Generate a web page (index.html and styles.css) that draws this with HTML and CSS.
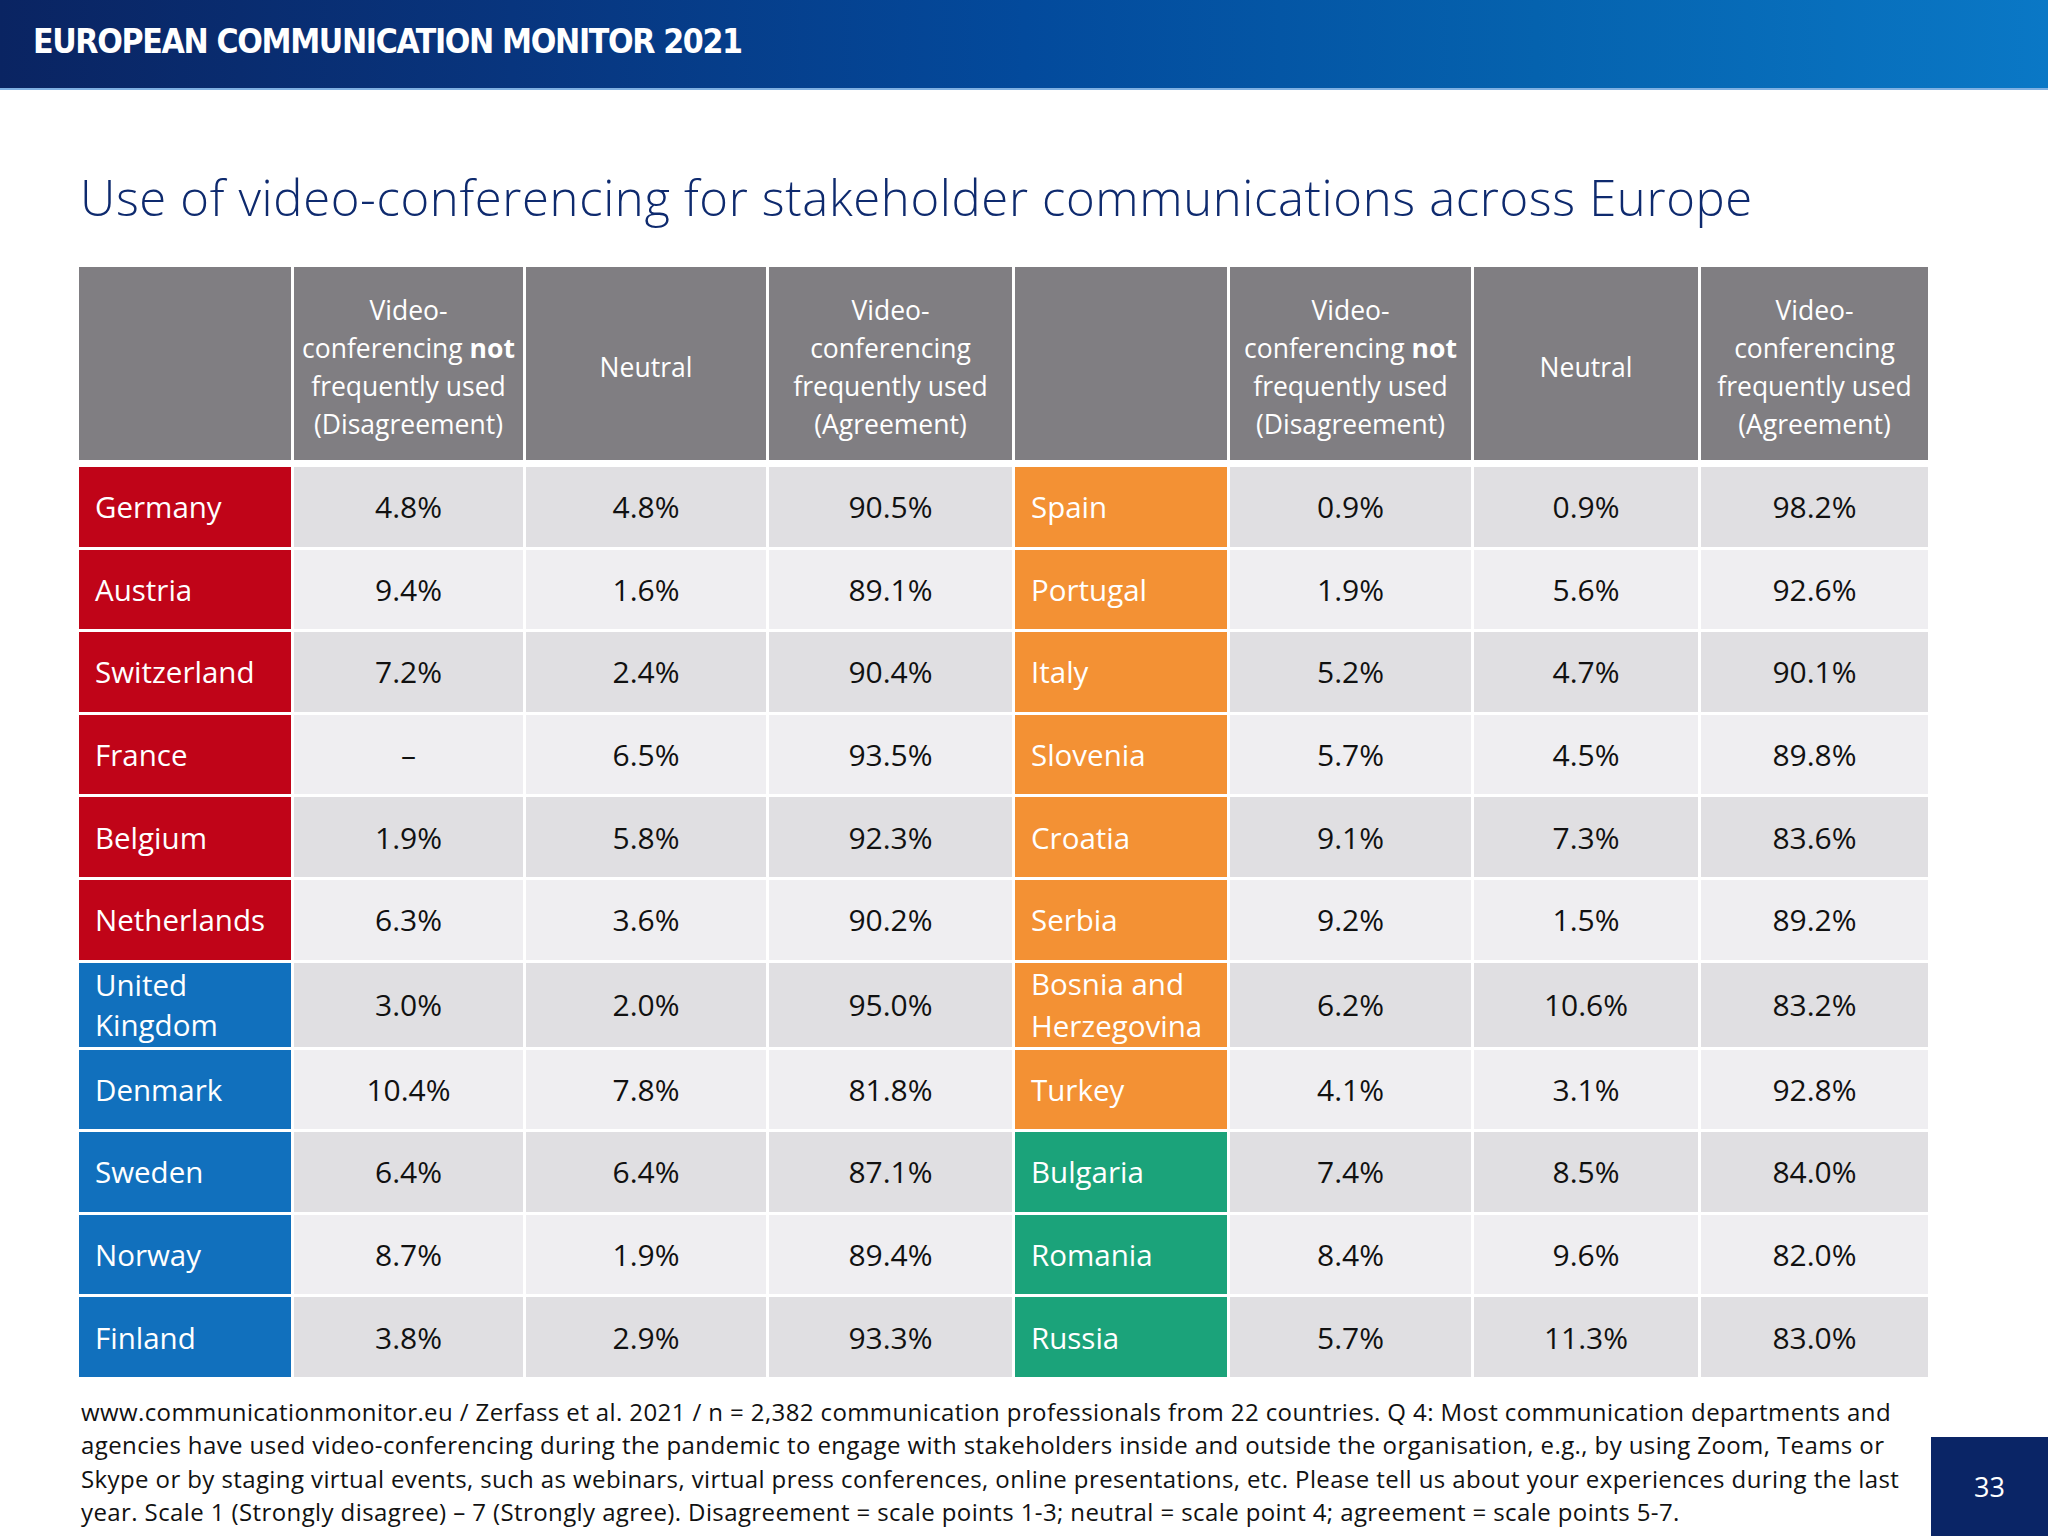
FILE: index.html
```html
<!DOCTYPE html>
<html lang="en">
<head>
<meta charset="utf-8">
<title>European Communication Monitor 2021</title>
<link rel="stylesheet" href="styles.css">
</head>
<body>
<div class="slide">
  <header class="topbar">
    <div class="brand">EUROPEAN COMMUNICATION MONITOR 2021</div>
  </header>
  <h1 class="title">Use of video-conferencing for stakeholder communications across Europe</h1>

  <div class="table">
    <div class="hcell"></div>
    <div class="hcell"><span>Video-<br>conferencing <b>not</b><br>frequently used<br>(Disagreement)</span></div>
    <div class="hcell"><span>Neutral</span></div>
    <div class="hcell"><span>Video-<br>conferencing<br>frequently used<br>(Agreement)</span></div>
    <div class="hcell"></div>
    <div class="hcell"><span>Video-<br>conferencing <b>not</b><br>frequently used<br>(Disagreement)</span></div>
    <div class="hcell"><span>Neutral</span></div>
    <div class="hcell"><span>Video-<br>conferencing<br>frequently used<br>(Agreement)</span></div>

    <div class="country red">Germany</div><div class="num dark">4.8%</div><div class="num dark">4.8%</div><div class="num dark">90.5%</div>
    <div class="country orange">Spain</div><div class="num dark">0.9%</div><div class="num dark">0.9%</div><div class="num dark">98.2%</div>

    <div class="country red">Austria</div><div class="num light">9.4%</div><div class="num light">1.6%</div><div class="num light">89.1%</div>
    <div class="country orange">Portugal</div><div class="num light">1.9%</div><div class="num light">5.6%</div><div class="num light">92.6%</div>

    <div class="country red">Switzerland</div><div class="num dark">7.2%</div><div class="num dark">2.4%</div><div class="num dark">90.4%</div>
    <div class="country orange">Italy</div><div class="num dark">5.2%</div><div class="num dark">4.7%</div><div class="num dark">90.1%</div>

    <div class="country red">France</div><div class="num light">–</div><div class="num light">6.5%</div><div class="num light">93.5%</div>
    <div class="country orange">Slovenia</div><div class="num light">5.7%</div><div class="num light">4.5%</div><div class="num light">89.8%</div>

    <div class="country red">Belgium</div><div class="num dark">1.9%</div><div class="num dark">5.8%</div><div class="num dark">92.3%</div>
    <div class="country orange">Croatia</div><div class="num dark">9.1%</div><div class="num dark">7.3%</div><div class="num dark">83.6%</div>

    <div class="country red">Netherlands</div><div class="num light">6.3%</div><div class="num light">3.6%</div><div class="num light">90.2%</div>
    <div class="country orange">Serbia</div><div class="num light">9.2%</div><div class="num light">1.5%</div><div class="num light">89.2%</div>

    <div class="country blue two tight"><span>United<br>Kingdom</span></div><div class="num dark">3.0%</div><div class="num dark">2.0%</div><div class="num dark">95.0%</div>
    <div class="country orange two"><span>Bosnia and<br>Herzegovina</span></div><div class="num dark">6.2%</div><div class="num dark">10.6%</div><div class="num dark">83.2%</div>

    <div class="country blue">Denmark</div><div class="num light">10.4%</div><div class="num light">7.8%</div><div class="num light">81.8%</div>
    <div class="country orange">Turkey</div><div class="num light">4.1%</div><div class="num light">3.1%</div><div class="num light">92.8%</div>

    <div class="country blue">Sweden</div><div class="num dark">6.4%</div><div class="num dark">6.4%</div><div class="num dark">87.1%</div>
    <div class="country green">Bulgaria</div><div class="num dark">7.4%</div><div class="num dark">8.5%</div><div class="num dark">84.0%</div>

    <div class="country blue">Norway</div><div class="num light">8.7%</div><div class="num light">1.9%</div><div class="num light">89.4%</div>
    <div class="country green">Romania</div><div class="num light">8.4%</div><div class="num light">9.6%</div><div class="num light">82.0%</div>

    <div class="country blue">Finland</div><div class="num dark">3.8%</div><div class="num dark">2.9%</div><div class="num dark">93.3%</div>
    <div class="country green">Russia</div><div class="num dark">5.7%</div><div class="num dark">11.3%</div><div class="num dark">83.0%</div>
  </div>

  <footer class="footer">
    <p class="source">www.communicationmonitor.eu / Zerfass et al. 2021 / n = 2,382 communication professionals from 22 countries. Q 4: Most communication departments and<br>agencies have used video-conferencing during the pandemic to engage with stakeholders inside and outside the organisation, e.g., by using Zoom, Teams or<br>Skype or by staging virtual events, such as webinars, virtual press conferences, online presentations, etc. Please tell us about your experiences during the last<br>year. Scale 1 (Strongly disagree) – 7 (Strongly agree). Disagreement = scale points 1-3; neutral = scale point 4; agreement = scale points 5-7.</p>
    <div class="pagenum">33</div>
  </footer>
</div>
</body>
</html>
```

FILE: styles.css
```css
* { box-sizing: border-box; }
html, body { margin: 0; padding: 0; background: #ffffff; }
body { font-family: "Open Sans", "Noto Sans", sans-serif; }

.slide {
  width: 2048px;
  height: 1536px;
  overflow: hidden;
  display: flex;
  flex-direction: column;
  background: #ffffff;
}

.topbar {
  height: 90px;
  flex: none;
  background: linear-gradient(90deg, #0a2462 0%, #08357e 25%, #034a9c 50%, #0562ae 75%, #0a78c6 100%);
  border-bottom: 2px solid #7fb0e2;
  display: flex;
  align-items: center;
  padding-left: 33px;
}
.brand {
  font-family: "DejaVu Sans Condensed", "DejaVu Sans", sans-serif;
  font-stretch: condensed;
  font-weight: bold;
  font-size: 33.5px;
  color: #ffffff;
  letter-spacing: -1.35px;
  margin-top: -6px;
}

.title {
  margin: 75px 0 0 80px;
  font-size: 49px;
  font-weight: 300;
  letter-spacing: 0.65px;
  line-height: 64px;
  color: #0e2a6e;
  white-space: nowrap;
}

.table {
  margin: 38px 0 0 79px;
  display: grid;
  grid-template-columns: 212px 229px 240px 243px 212px 241px 224px 227px;
  grid-template-rows: 197px repeat(6, 79.6px) 84px repeat(4, 79.6px);
  gap: 3px;
  width: 1849px;
}

.hcell {
  height: 193px;
  background: #807e82;
  color: #ffffff;
  font-size: 26.5px;
  line-height: 38px;
  text-align: center;
  display: flex;
  align-items: center;
  justify-content: center;
  white-space: nowrap;
  padding-top: 6px;
}
.hcell b { font-weight: 700; }

.country {
  color: #ffffff;
  font-size: 29.5px;
  display: flex;
  align-items: center;
  padding-left: 16px;
  white-space: nowrap;
}
.country.two { line-height: 42px; }
.country.two.tight { line-height: 40px; }
.red { background: #c00418; }
.blue { background: #1170bd; }
.orange { background: #f39134; }
.green { background: #1ba37a; }

.num {
  color: #111111;
  font-size: 30px;
  display: flex;
  align-items: center;
  justify-content: center;
}
.dark { background: #e0dfe2; }
.light { background: #efeef1; }

.footer {
  margin-top: 18px;
  flex: 1;
  display: flex;
  justify-content: space-between;
}
.source {
  margin: 0 0 0 81px;
  font-size: 24px;
  letter-spacing: 0.4px;
  line-height: 33.5px;
  color: #111111;
  white-space: nowrap;
}
.pagenum {
  align-self: flex-end;
  width: 117px;
  height: 99px;
  background: #0a2566;
  color: #ffffff;
  font-size: 27px;
  display: flex;
  align-items: center;
  justify-content: center;
}
```
